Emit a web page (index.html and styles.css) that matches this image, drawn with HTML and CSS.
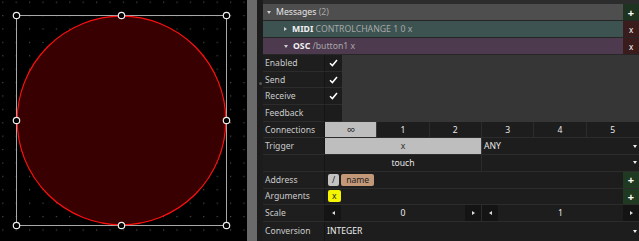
FILE: index.html
```html
<!DOCTYPE html>
<html>
<head>
<meta charset="utf-8">
<link rel="stylesheet" href="styles.css">
</head>
<body>
<div class="app">
  <div class="canvas">
    <svg class="canvas-svg" width="247" height="241" viewBox="0 0 247 241">
      <defs>
        <pattern id="dots" x="2.2" y="1.6" width="13.4" height="13.4" patternUnits="userSpaceOnUse">
          <rect x="0" y="0" width="1.2" height="1.2" fill="#4a4a4a"/>
        </pattern>
      </defs>
      <rect x="0" y="0" width="247" height="241" fill="#000"/>
      <rect x="0" y="0" width="247" height="241" fill="url(#dots)"/>
      <rect x="16.5" y="15.5" width="210" height="210" fill="none" stroke="#a8a8a8" stroke-width="1"/>
      <circle cx="121.5" cy="120.5" r="104.3" fill="#380000" stroke="#ff1010" stroke-width="1.2"/>
      <g fill="#000" stroke="#eee" stroke-width="1.2">
        <circle cx="16.5" cy="15.5" r="3.2"/>
        <circle cx="121.5" cy="15.5" r="3.2"/>
        <circle cx="226.5" cy="15.5" r="3.2"/>
        <circle cx="16.5" cy="120.5" r="3.2"/>
        <circle cx="226.5" cy="120.5" r="3.2"/>
        <circle cx="16.5" cy="225.5" r="3.2"/>
        <circle cx="121.5" cy="225.5" r="3.2"/>
        <circle cx="226.5" cy="225.5" r="3.2"/>
      </g>
    </svg>
  </div>
  <div class="splitter"></div>
  <div class="gutter"><span class="grip"></span></div>
  <div class="panel">
    <div class="topstrip"></div>
    <div class="hrow hrow-messages">
      <div class="htext"><span class="tri tri-down"></span><span class="txt">Messages <span class="dim">(2)</span></span></div>
      <div class="hbtn hbtn-add">+</div>
    </div>
    <div class="hrow hrow-midi">
      <div class="htext sub"><span class="tri tri-right"></span><span class="txt"><b>MIDI</b> <span class="dim">CONTROLCHANGE 1 0 x</span></span></div>
      <div class="hbtn hbtn-del">x</div>
    </div>
    <div class="hrow hrow-osc">
      <div class="htext sub"><span class="tri tri-down"></span><span class="txt"><b>OSC</b> <span class="dim">/button1 x</span></span></div>
      <div class="hbtn hbtn-del">x</div>
    </div>

    <div class="checks">
      <div class="label">Enabled</div><div class="check"><svg width="9" height="8" viewBox="0 0 9 8"><path d="M1 4.2 L3.4 6.6 L8 1" fill="none" stroke="#fff" stroke-width="1.5"/></svg></div>
      <div class="filler"></div>
      <div class="label">Send</div><div class="check"><svg width="9" height="8" viewBox="0 0 9 8"><path d="M1 4.2 L3.4 6.6 L8 1" fill="none" stroke="#fff" stroke-width="1.5"/></svg></div>
      <div class="label">Receive</div><div class="check"><svg width="9" height="8" viewBox="0 0 9 8"><path d="M1 4.2 L3.4 6.6 L8 1" fill="none" stroke="#fff" stroke-width="1.5"/></svg></div>
      <div class="label">Feedback</div><div class="check"></div>
    </div>

    <div class="row">
      <div class="label">Connections</div>
      <div class="cells six">
        <div class="cell sel"><span class="inf">∞</span></div><div class="cell">1</div><div class="cell">2</div><div class="cell">3</div><div class="cell">4</div><div class="cell">5</div>
      </div>
    </div>
    <div class="row">
      <div class="label">Trigger</div>
      <div class="cells two">
        <div class="cell sel">x</div>
        <div class="cell select"><span>ANY</span><span class="tri tri-down small"></span></div>
      </div>
    </div>
    <div class="row">
      <div class="label"></div>
      <div class="cells two">
        <div class="cell">touch</div>
        <div class="cell select"><span></span><span class="tri tri-down small"></span></div>
      </div>
    </div>
    <div class="row">
      <div class="label">Address</div>
      <div class="value chips">
        <span class="chip chip-gray">/</span><span class="chip chip-tan">name</span>
        <span class="spacer"></span>
        <div class="addbtn">+</div>
      </div>
    </div>
    <div class="row">
      <div class="label">Arguments</div>
      <div class="value chips">
        <span class="chip chip-yellow">x</span>
        <span class="spacer"></span>
        <div class="addbtn">+</div>
      </div>
    </div>
    <div class="row">
      <div class="label">Scale</div>
      <div class="cells two">
        <div class="spin"><span class="arr"><span class="tri tri-left"></span></span><span class="num">0</span><span class="arr"><span class="tri tri-right"></span></span></div>
        <div class="spin"><span class="arr"><span class="tri tri-left"></span></span><span class="num">1</span><span class="arr"><span class="tri tri-right"></span></span></div>
      </div>
    </div>
    <div class="row last">
      <div class="label">Conversion</div>
      <div class="value select conv"><span>INTEGER</span><span class="tri tri-down small"></span></div>
    </div>
  </div>
</div>
</body>
</html>
```

FILE: styles.css
```css
html, body {
  margin: 0;
  padding: 0;
  background: #1e1e1e;
}
body {
  font-family: "Noto Sans", "Open Sans", sans-serif;
  font-size: 8.6px;
  color: #cfcfcf;
  width: 639px;
  height: 241px;
  overflow: hidden;
}
.app {
  display: flex;
  width: 639px;
  height: 241px;
}
.canvas {
  width: 247px;
  height: 241px;
  flex: none;
  background: #000;
}
.canvas-svg { display: block; }
.splitter {
  width: 10px;
  flex: none;
  background: #6a6a6a;
}
.gutter {
  width: 6px;
  flex: none;
  background: #1c1c1c;
  position: relative;
}
.grip {
  position: absolute;
  left: 2px;
  top: 82px;
  width: 3px;
  height: 3px;
  border-radius: 50%;
  background: #555;
}
.panel {
  flex: 1;
  display: flex;
  flex-direction: column;
  background: #1e1e1e;
  min-width: 0;
}
.topstrip {
  height: 4px;
  background: #2c2c2c;
}
.hrow {
  display: flex;
  height: 16px;
  border-bottom: 1px solid #262626;
  color: #e6e6e6;
}
.hrow-messages { background: #4e4e4e; }
.hrow-midi { background: #3c5351; }
.hrow-osc { background: #4e3a4f; }
.htext {
  flex: 1;
  display: flex;
  align-items: center;
  padding-left: 4px;
  white-space: pre;
  font-size: 8.7px;
}
.htext.sub { padding-left: 21px; }
.htext b { font-weight: bold; color: #f0f0f0; }
.dim { color: #a8a8a8; }
.hbtn {
  width: 16px;
  flex: none;
  display: flex;
  align-items: center;
  justify-content: center;
  color: #fff;
  font-size: 9px;
}
.hbtn-add { background: #1e3420; font-weight: bold; font-size: 11px; }
.hbtn-del { background: #3b1c1c; font-size: 8px; }

.tri {
  display: inline-block;
  width: 0;
  height: 0;
  margin-right: 5px;
}
.tri-down {
  border-left: 2.5px solid transparent;
  border-right: 2.5px solid transparent;
  border-top: 3px solid #cfcfcf;
}
.tri-right {
  border-top: 2.5px solid transparent;
  border-bottom: 2.5px solid transparent;
  border-left: 3px solid #cfcfcf;
}
.tri-left {
  border-top: 2.5px solid transparent;
  border-bottom: 2.5px solid transparent;
  border-right: 3px solid #ddd;
}
.tri.small { margin-right: 0; border-top-color: #eee; }

.checks {
  display: grid;
  grid-template-columns: 62px 17px 1fr;
  grid-template-rows: repeat(4, 16.7px);
}
.checks .label, .checks .check {
  border-bottom: 1px solid #2c2c2c;
}
.checks .filler {
  grid-column: 3;
  grid-row: 1 / span 4;
  background: #363636;
}
.label {
  display: flex;
  align-items: center;
  padding-left: 2px;
  background: #1e1e1e;
  color: #cbcbcb;
  box-sizing: border-box;
  border-right: 1px solid #141414;
}
.check {
  display: flex;
  align-items: center;
  justify-content: center;
  background: #1c1c1c;
  box-sizing: border-box;
}
.row {
  display: grid;
  grid-template-columns: 62px 1fr;
  height: 16.7px;
  border-bottom: 1px solid #2c2c2c;
  box-sizing: border-box;
}
.row.last { border-bottom: 0; flex: 1; }
.cells {
  display: grid;
}
.cells.six { grid-template-columns: repeat(6, 1fr); }
.cells.two { grid-template-columns: 1fr 1fr; }
.cell {
  display: flex;
  align-items: center;
  justify-content: center;
  color: #e8e8e8;
  border-right: 1px solid #2c2c2c;
  background: #1d1d1d;
}
.cell:last-child { border-right: 0; }
.cell.sel {
  background: #bebebe;
  color: #2a2a2a;
  border-right-color: #3a3a3a;
}
.inf { font-size: 12px; line-height: 1; }
.cell.select, .value.select {
  justify-content: space-between;
  padding: 0 2px 0 2px;
}
.value.select {
  display: flex;
  align-items: center;
  color: #eee;
  background: #1d1d1d;
}
.value.chips {
  display: flex;
  align-items: center;
  padding-left: 3px;
  background: #1d1d1d;
}
.chip {
  display: inline-flex;
  align-items: center;
  height: 12px;
  padding: 0 4px;
  border-radius: 2px;
  color: #222;
  margin-right: 2px;
}
.chip-gray { background: #c2c2c2; }
.chip-tan { background: #c29878; padding: 0 5px; }
.chip-yellow { background: #f5f500; }
.spacer { flex: 1; }
.addbtn {
  align-self: stretch;
  width: 16px;
  display: flex;
  align-items: center;
  justify-content: center;
  background: #1f3a20;
  color: #fff;
  font-weight: bold;
  font-size: 11px;
}
.spin {
  display: flex;
  align-items: stretch;
  background: #1d1d1d;
  border-right: 1px solid #2c2c2c;
}
.spin:last-child { border-right: 0; }
.spin .arr {
  width: 16px;
  display: flex;
  align-items: center;
  justify-content: center;
  background: #141414;
}
.spin .arr .tri { margin: 0; }
.spin .tri-right { border-left-color: #ddd; }
.spin .num {
  flex: 1;
  display: flex;
  align-items: center;
  justify-content: center;
  color: #eee;
}
```
